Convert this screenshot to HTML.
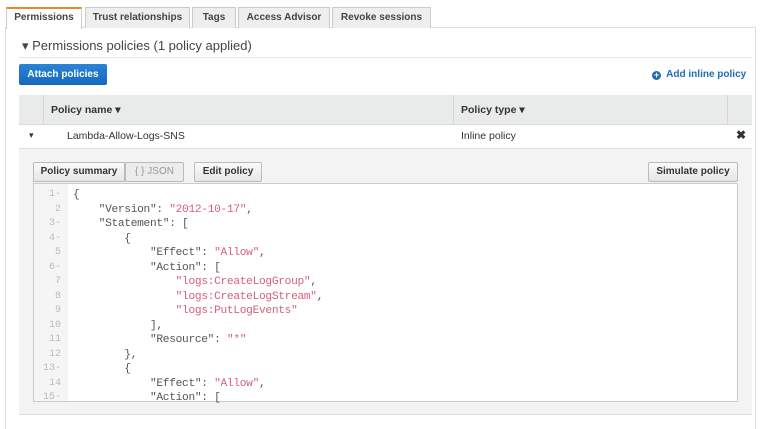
<!DOCTYPE html>
<html style="width:768px;height:429px;overflow:hidden"><head><style>
*{box-sizing:border-box;margin:0;padding:0}
body{width:768px;height:429px;background:#fff;font-family:"Liberation Sans",sans-serif;color:#333;position:relative;overflow:hidden;font-size:11px}
.a{position:absolute}
.tab{position:absolute;top:7px;height:21px;border:1px solid #ccc;border-bottom:none;background:#eee;font-weight:bold;font-size:10px;text-align:center;line-height:20px;color:#444}
.btn{position:absolute;height:20px;border:1px solid #bbb;border-radius:2px;background:linear-gradient(#fafafa,#e6e6e6);font-weight:bold;font-size:10px;line-height:18px;text-align:center;color:#333}
.code{position:absolute;left:73px;top:188px;font-family:"Liberation Mono",monospace;font-size:11.2px;line-height:14.5px;color:#555;white-space:pre;letter-spacing:-0.3px}
.s{color:#d2627a}
.ln{position:absolute;left:33px;top:188px;width:34px;font-family:"Liberation Mono",monospace;font-size:10px;line-height:14.5px;color:#bbb;white-space:pre;text-align:right;padding-right:6px}
</style></head><body>
<div class="a" style="left:5px;top:27px;width:751px;height:402px;border:1px solid #ddd;border-bottom:none"></div>
<div class="tab" style="left:6px;width:76px;background:#fff;border-top:2px solid #e88a2c;height:22px;line-height:18px">Permissions</div>
<div class="tab" style="left:85px;width:105px">Trust relationships</div>
<div class="tab" style="left:192px;width:44px">Tags</div>
<div class="tab" style="left:238px;width:92px">Access Advisor</div>
<div class="tab" style="left:332px;width:99px">Revoke sessions</div>
<div class="a" style="left:22px;top:38px;font-size:13px;color:#444">▾ Permissions policies (1 policy applied)</div>
<div class="a" style="left:19px;top:57px;width:733px;height:1px;background:#e5e5e5"></div>
<div class="a" style="left:19px;top:64px;width:88px;height:21px;background:linear-gradient(#2b84d6,#1568be);border-radius:2px;color:#fff;font-weight:bold;font-size:10px;text-align:center;line-height:21px">Attach policies</div>
<div class="a" style="left:652px;top:69px;font-weight:bold;font-size:10px;color:#1f6db5"><span style="display:inline-block;width:9px;height:9px;border-radius:50%;background:#1f6db5;color:#fff;font-size:9px;line-height:9px;text-align:center;vertical-align:-1px">+</span>&nbsp; Add inline policy</div>
<div class="a" style="left:19px;top:95px;width:733px;height:30px;background:#e9ebeb;border-bottom:1px solid #ddd"></div>
<div class="a" style="left:43px;top:95px;width:1px;height:30px;background:#d5d5d5"></div>
<div class="a" style="left:453px;top:95px;width:1px;height:30px;background:#d5d5d5"></div>
<div class="a" style="left:727px;top:95px;width:1px;height:30px;background:#d5d5d5"></div>
<div class="a" style="left:51px;top:104px;font-weight:bold;font-size:10.5px">Policy name ▾</div>
<div class="a" style="left:461px;top:104px;font-weight:bold;font-size:10.5px">Policy type ▾</div>
<div class="a" style="left:29px;top:130px;font-size:9px">▾</div>
<div class="a" style="left:67px;top:130px;font-size:10.5px">Lambda-Allow-Logs-SNS</div>
<div class="a" style="left:461px;top:130px;font-size:10.5px">Inline policy</div>
<div class="a" style="left:736px;top:128px;font-size:12px;font-weight:bold">✖</div>
<div class="a" style="left:19px;top:148px;width:733px;height:267px;background:#f3f3f3;border-top:1px solid #ddd;border-bottom:1px solid #ddd"></div>
<div class="btn" style="left:33px;top:162px;width:92px;border-radius:2px 0 0 0">Policy summary</div>
<div class="btn" style="left:125px;top:162px;width:59px;background:#ececec;color:#999;font-weight:normal">{ } JSON</div>
<div class="btn" style="left:194px;top:162px;width:68px">Edit policy</div>
<div class="btn" style="left:648px;top:162px;width:90px">Simulate policy</div>
<div class="a" style="left:33px;top:183px;width:705px;height:219px;background:#fff;border:1px solid #ccc;overflow:hidden">
<div class="a" style="left:0;top:0;width:34px;height:219px;background:#f5f5f5"></div></div>
<div class="ln">1-
2
3-
4-
5
6-
7
8
9
10
11
12
13-
14
15-</div>
<div class="code">{
    "Version": <span class="s">"2012-10-17"</span>,
    "Statement": [
        {
            "Effect": <span class="s">"Allow"</span>,
            "Action": [
                <span class="s">"logs:CreateLogGroup"</span>,
                <span class="s">"logs:CreateLogStream"</span>,
                <span class="s">"logs:PutLogEvents"</span>
            ],
            "Resource": <span class="s">"*"</span>
        },
        {
            "Effect": <span class="s">"Allow"</span>,
            "Action": [</div>
</body></html>
